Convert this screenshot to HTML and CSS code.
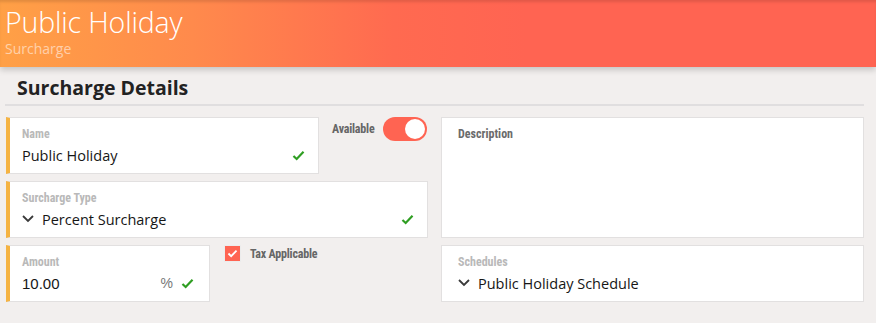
FILE: index.html
```html
<!DOCTYPE html>
<html>
<head>
<meta charset="utf-8">
<link rel="stylesheet" href="styles.css">
</head>
<body>
<header class="hero">
  <h1 class="hero-title">Public Holiday</h1>
  <div class="hero-sub">Surcharge</div>
</header>
<main class="page">
  <h2 class="section-title">Surcharge Details</h2>
  <div class="form-grid">
    <div class="row row-name">
      <div class="field field-name">
        <div class="label">Name</div>
        <div class="value-line">
          <span class="value">Public Holiday</span>
          <svg class="check" viewBox="0 0 14 12" width="13" height="11"><path d="M1.5 6.5 L5 9.8 L12.5 2" fill="none" stroke="#2f9e22" stroke-width="2.4"/></svg>
        </div>
      </div>
      <div class="available">
        <span class="inline-label">Available</span>
        <span class="toggle"><span class="knob"></span></span>
      </div>
    </div>
    <div class="field field-desc">
      <div class="label label-dark">Description</div>
    </div>
    <div class="field field-type">
      <div class="label">Surcharge Type</div>
      <div class="value-line">
        <svg class="chev" viewBox="0 0 12 8" width="12" height="8"><path d="M1 1 L6 6 L11 1" fill="none" stroke="#3a3a3a" stroke-width="1.8"/></svg>
        <span class="value grow">Percent Surcharge</span>
        <svg class="check" viewBox="0 0 14 12" width="13" height="11"><path d="M1.5 6.5 L5 9.8 L12.5 2" fill="none" stroke="#2f9e22" stroke-width="2.4"/></svg>
      </div>
    </div>
    <div class="row row-amount">
      <div class="field field-amount">
        <div class="label">Amount</div>
        <div class="value-line">
          <span class="value value-num grow">10.00</span>
          <span class="unit">%</span>
          <svg class="check" viewBox="0 0 14 12" width="13" height="11"><path d="M1.5 6.5 L5 9.8 L12.5 2" fill="none" stroke="#2f9e22" stroke-width="2.4"/></svg>
        </div>
      </div>
      <div class="tax">
        <span class="checkbox"><svg viewBox="0 0 12 10" width="11" height="9"><path d="M1.5 5 L4.5 8 L10.5 1.8" fill="none" stroke="#fff" stroke-width="2"/></svg></span>
        <span class="inline-label">Tax Applicable</span>
      </div>
    </div>
    <div class="field field-sched">
      <div class="label">Schedules</div>
      <div class="value-line">
        <svg class="chev" viewBox="0 0 12 8" width="12" height="8"><path d="M1 1 L6 6 L11 1" fill="none" stroke="#3a3a3a" stroke-width="1.8"/></svg>
        <span class="value">Public Holiday Schedule</span>
      </div>
    </div>
  </div>
</main>
</body>
</html>
```

FILE: styles.css
```css
* { box-sizing: border-box; }
html, body { margin: 0; padding: 0; }
body {
  background: #f2efee;
  font-family: "Open Sans", "Noto Sans", sans-serif;
  width: 876px;
  height: 323px;
  overflow: hidden;
}
.hero {
  height: 67px;
  background: linear-gradient(90deg, #ffa046 0%, #ff8a4c 22%, #ff6a50 45%, #ff6452 60%, #ff6452 100%);
  box-shadow: inset 0 3px 3px -1px rgba(0,0,0,0.12), 0 3px 6px rgba(0,0,0,0.18);
  padding: 7px 0 0 5px;
  position: relative;
  z-index: 1;
}
.hero-title {
  margin: 0;
  font-weight: 300;
  font-size: 28.5px;
  line-height: 30px;
  color: #fff;
  letter-spacing: -0.15px;
}
.hero-sub {
  font-size: 14px;
  line-height: 16px;
  color: rgba(255,255,255,0.55);
  margin-top: 4px;
}
.page {
  padding: 8px 12px 0 6px;
}
.section-title {
  margin: 0 0 0 -1px;
  padding: 0 0 4px 12px;
  font-size: 19.5px;
  font-weight: 700;
  line-height: 25px;
  color: #222;
  border-bottom: 2px solid #e0dedf;
}
.form-grid {
  margin-top: 11px;
  display: grid;
  grid-template-columns: 422px 423px;
  grid-template-rows: 57px 57px 57px;
  column-gap: 13px;
  row-gap: 7px;
}
.row { display: flex; align-items: flex-start; }
.field {
  background: #fff;
  border: 1px solid #e2e0e0;
  border-left: 4px solid #f5b342;
  padding: 8px 13px 0 12px;
}
.field-desc, .field-sched {
  border-left: 1px solid #e2e0e0;
  padding-left: 16px;
}
.field-desc { grid-column: 2; grid-row: 1 / span 2; }
.field-sched { grid-column: 2; grid-row: 3; }
.field-type { grid-column: 1; grid-row: 2; }
.row-name { grid-column: 1; grid-row: 1; }
.row-amount { grid-column: 1; grid-row: 3; }
.field-name { width: 313px; height: 57px; flex: none; }
.field-amount { width: 204px; height: 57px; padding-right: 15px; flex: none; }
.label {
  font-family: "Liberation Sans Narrow", "Roboto Condensed", "Arial Narrow", "Liberation Sans", sans-serif;
  font-stretch: condensed;
  font-size: 12px;
  line-height: 16px;
  color: #b9b9b9;
  font-weight: 700;
}
.label-dark { color: #6b6b6b; }
.value-line {
  display: flex;
  align-items: center;
  margin-top: 2px;
  height: 22px;
}
.value {
  font-size: 14.5px;
  color: #161616;
  flex: 1;
}
.value-num {
  font-family: "Liberation Sans", Arial, sans-serif;
  font-size: 15px;
}
.grow { flex: 1; }
.chev { margin-right: 8px; flex: none; }
.check { flex: none; }
.unit {
  font-family: "Liberation Sans", Arial, sans-serif;
  font-size: 14px;
  color: #777;
  margin-right: 8px;
}
.available {
  display: flex;
  align-items: center;
  margin-left: 13px;
  gap: 9px;
  flex: none;
}
.inline-label {
  font-family: "Liberation Sans Narrow", "Roboto Condensed", "Arial Narrow", "Liberation Sans", sans-serif;
  font-stretch: condensed;
  font-size: 12px;
  font-weight: 700;
  color: #666;
  letter-spacing: -0.2px;
}
.toggle {
  width: 44px;
  height: 24px;
  border-radius: 12px;
  background: #ff6452;
  display: flex;
  justify-content: flex-end;
  align-items: center;
  padding: 2px;
}
.knob {
  width: 20px;
  height: 20px;
  border-radius: 50%;
  background: #fff;
}
.tax {
  display: flex;
  align-items: center;
  margin-left: 14px;
  gap: 9px;
  flex: none;
}
.checkbox {
  width: 17px;
  height: 17px;
  background: #ff6452;
  border: 1px solid #ececec;
  display: flex;
  align-items: center;
  justify-content: center;
}
.checkbox svg { display: block; }
```
